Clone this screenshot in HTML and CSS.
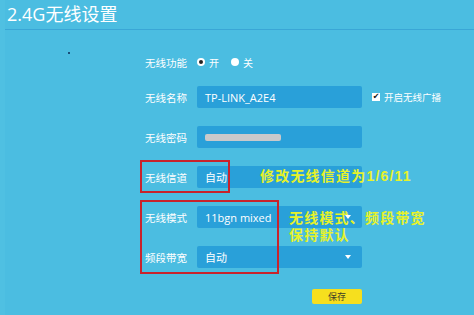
FILE: index.html
```
<!DOCTYPE html>
<html lang="zh">
<head>
<meta charset="utf-8">
<title>2.4G无线设置</title>
<link rel="stylesheet" href="styles.css">
</head>
<body>
<div class="page">
  <h1 class="title">2.4G无线设置</h1>
  <span class="dot"></span>
  <form class="form">
    <div class="row row-first">
      <span class="lbl">无线功能</span>
      <span class="radio on"></span><span class="opt">开</span>
      <span class="radio"></span><span class="opt">关</span>
    </div>
    <div class="row">
      <span class="lbl">无线名称</span>
      <div class="field">TP-LINK_A2E4</div>
      <span class="check"><span class="box">✔</span>开启无线广播</span>
    </div>
    <div class="row">
      <span class="lbl">无线密码</span>
      <div class="field"><span class="mask"></span></div>
    </div>
    <div class="row">
      <span class="lbl">无线信道</span>
      <div class="field">自动</div>
    </div>
    <div class="row">
      <span class="lbl">无线模式</span>
      <div class="field select">11bgn mixed<span class="caret"></span></div>
    </div>
    <div class="row">
      <span class="lbl">频段带宽</span>
      <div class="field select">自动<span class="caret"></span></div>
    </div>
    <div class="row-save">
      <button type="button" class="save">保存</button>
    </div>
  </form>
  <div class="mark mark-1"></div>
  <div class="mark mark-2"></div>
  <div class="note note-1">修改无线信道为1/6/11</div>
  <div class="note note-2">无线模式、频段带宽<br>保持默认</div>
</div>
</body>
</html>
```
FILE: styles.css
```
html, body {
  margin: 0;
  padding: 0;
}
body {
  background: #4bbde1;
  font-family: "Open Sans", "Noto Sans CJK SC", sans-serif;
  color: #fff;
}
.page {
  position: relative;
  width: 474px;
  height: 315px;
  overflow: hidden;
  border-left: 5px solid #4fc0e2;
  box-sizing: border-box;
}
.title {
  margin: 0 0 0 -5px;
  height: 29px;
  padding-left: 7px;
  font-size: 18px;
  font-weight: normal;
  line-height: 29px;
  border-bottom: 1px solid #3aa6d6;
  font-family: "Open Sans", "Noto Sans CJK SC", sans-serif;
}
.dot {
  position: absolute;
  left: 63px;
  top: 52px;
  width: 2px;
  height: 2px;
  background: #1a4f7a;
}
.form {
  padding: 21px 0 0 135px;
}
.row {
  display: flex;
  align-items: center;
  height: 22px;
  margin-bottom: 18px;
}
.row-first {
  margin-bottom: 13px;
}
.lbl {
  width: 52px;
  padding-left: 5px;
  font-size: 10.5px;
  font-family: "Noto Sans CJK SC", sans-serif;
}
.radio {
  width: 8px;
  height: 8px;
  border-radius: 50%;
  background: #fff;
  box-sizing: border-box;
  margin-right: 4px;
}
.radio.on {
  border: 2px solid #fff;
  background: #222;
}
.opt {
  font-size: 10px;
  margin-right: 12px;
  font-family: "Noto Sans CJK SC", sans-serif;
}
.field {
  position: relative;
  width: 165px;
  height: 22px;
  box-sizing: border-box;
  padding-left: 8px;
  display: flex;
  align-items: center;
  background: #29a0d9;
  border-radius: 2px;
  font-size: 11px;
}
.mask {
  width: 76px;
  height: 7px;
  border-radius: 2px;
  background: #c9c9cb;
}
.caret {
  position: absolute;
  right: 11px;
  top: 9px;
  width: 0;
  height: 0;
  border-left: 3px solid transparent;
  border-right: 3px solid transparent;
  border-top: 4px solid #fff;
}
.check {
  display: flex;
  align-items: center;
  margin-left: 10px;
  font-size: 9.5px;
  font-family: "Noto Sans CJK SC", sans-serif;
}
.check .box {
  width: 8px;
  height: 8px;
  margin-right: 4px;
  background: #fff;
  color: #111;
  font-size: 8px;
  line-height: 8px;
  text-align: center;
  font-family: "DejaVu Sans", sans-serif;
}
.row-save {
  padding-left: 172px;
  padding-top: 3px;
}
.save {
  display: block;
  width: 50px;
  height: 15px;
  padding: 0;
  border: 0;
  border-radius: 2px;
  background: #f6df1e;
  color: #3e3e28;
  font-size: 9px;
  font-family: "Noto Sans CJK SC", sans-serif;
}
.mark {
  position: absolute;
  border: 2px solid #c8232c;
  box-sizing: border-box;
}
.mark-1 {
  left: 135px;
  top: 160px;
  width: 90px;
  height: 33px;
}
.mark-2 {
  left: 135px;
  top: 200px;
  width: 139px;
  height: 74px;
}
.note {
  position: absolute;
  color: #e6f22a;
  font-family: "Liberation Sans", "Noto Sans CJK SC", sans-serif;
  font-weight: bold;
  font-size: 14px;
  line-height: 17px;
  letter-spacing: 1.2px;
}
.note-1 {
  left: 255px;
  top: 168px;
}
.note-2 {
  left: 284px;
  top: 210px;
}
```
